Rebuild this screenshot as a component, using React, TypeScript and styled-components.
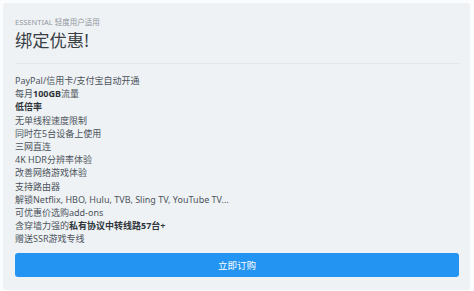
import { FC } from 'react'
import styled, { createGlobalStyle } from 'styled-components'

const GlobalStyle = createGlobalStyle`
  html, body {
    margin: 0;
    padding: 0;
    background: #fbfcfd;
  }
  body {
    font-family: "Noto Sans", "Noto Sans CJK SC", sans-serif;
  }
`

const Page = styled.div`
  padding: 3px 4px 2px 3px;
`

const Card = styled.div`
  background-color: #eef2f5;
  border-radius: 3px;
  padding: 14px 10px 13px 12px;
  display: flex;
  flex-direction: column;
`

const Header = styled.header`
  display: flex;
  flex-direction: column;
  padding-bottom: 11px;
  border-bottom: 1px solid #e2e6ea;
`

const Overline = styled.div`
  font-size: 7.5px;
  line-height: 10px;
  color: #9197a0;
`

const Title = styled.h2`
  margin: 3px 0 0;
  font-size: 17.3px;
  line-height: 22px;
  font-weight: 400;
  color: #3a3f46;
`

const Features = styled.ul`
  list-style: none;
  margin: 0;
  padding: 10px 0 0;
  display: flex;
  flex-direction: column;
`

const Feature = styled.li`
  font-size: 9px;
  line-height: 13.2px;
  color: #4d535b;
  white-space: nowrap;

  strong {
    font-weight: 700;
    color: #2f343a;
  }
`

const OrderButton = styled.button`
  margin-top: 7px;
  margin-right: 1px;
  height: 24px;
  border: none;
  border-radius: 3px;
  background: #2394f1;
  color: #ffffff;
  font-family: inherit;
  font-size: 9.5px;
  cursor: pointer;
`

const features: React.ReactNode[] = [
  'PayPal/信用卡/支付宝自动开通',
  <>每月<strong>100GB</strong>流量</>,
  <strong>低倍率</strong>,
  '无单线程速度限制',
  '同时在5台设备上使用',
  '三网直连',
  '4K HDR分辨率体验',
  '改善网络游戏体验',
  '支持路由器',
  '解锁Netflix, HBO, Hulu, TVB, Sling TV, YouTube TV...',
  '可优惠价选购add-ons',
  <>含穿墙力强的<strong>私有协议中转线路57台+</strong></>,
  '赠送SSR游戏专线',
]

const App: FC = () => {
  return (
    <Page>
      <GlobalStyle />
      <Card>
        <Header>
          <Overline>ESSENTIAL 轻度用户适用</Overline>
          <Title>绑定优惠!</Title>
        </Header>
        <Features>
          {features.map((item, i) => (
            <Feature key={i}>{item}</Feature>
          ))}
        </Features>
        <OrderButton>立即订购</OrderButton>
      </Card>
    </Page>
  )
}

export default App
